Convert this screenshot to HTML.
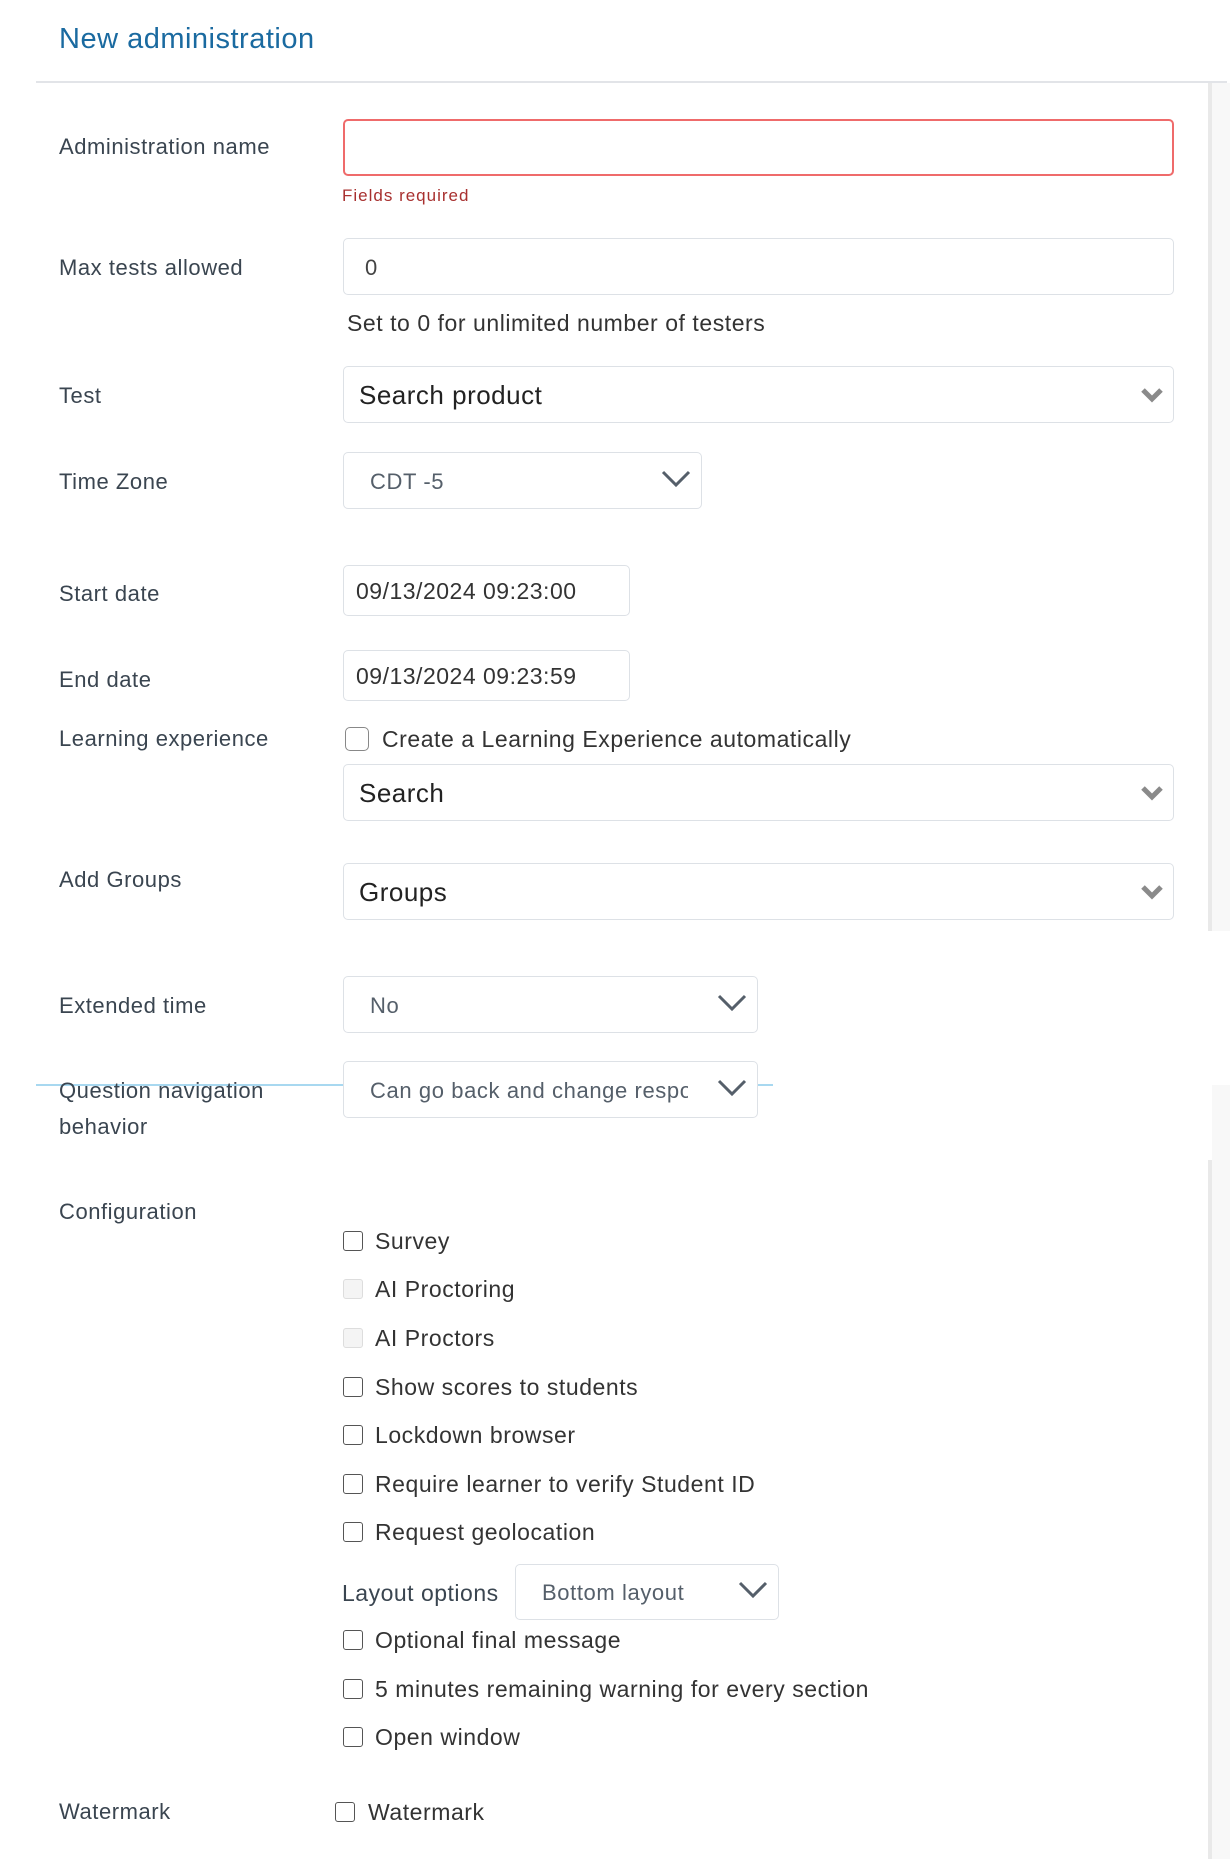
<!DOCTYPE html>
<html><head><meta charset="utf-8"><style>
*{margin:0;padding:0;box-sizing:border-box}
body{width:1230px;height:1859px;background:#fff;position:relative;overflow:hidden;font-family:"Liberation Sans",sans-serif;color:#3a4048}
.a{position:absolute;white-space:nowrap}
.lbl{font-size:22px;line-height:24px;color:#3a4550;letter-spacing:0.55px}
.box{position:absolute;border:1.5px solid #dde1e6;border-radius:5px;background:#fff}
.big{font-size:26px;color:#222;position:absolute;line-height:30px;white-space:nowrap;letter-spacing:0.5px}
.sm{font-size:22px;color:#555f6a;position:absolute;line-height:26px;white-space:nowrap;letter-spacing:0.6px}
.cb{position:absolute;width:20px;height:20px;border:1.8px solid #555;border-radius:3px;background:#fff}
.cb.d{border-color:#ddd;background:#f4f4f4}
.ct{font-size:23px;line-height:26px;color:#333;letter-spacing:0.55px}
svg{position:absolute}
</style></head><body>
<div class="a" style="left:59px;top:22px;font-size:29px;line-height:34px;color:#1a6aa0;letter-spacing:0.5px">New administration</div>
<div class="a" style="left:36px;top:81px;width:1191px;height:2px;background:#e2e4e8"></div>
<div class="a" style="left:1208px;top:83px;width:4px;height:848px;background:#e9e9e9"></div>
<div class="a" style="left:1212px;top:83px;width:18px;height:848px;background:#f8f8f8"></div>
<div class="a" style="left:1208px;top:1160px;width:4px;height:699px;background:#e9e9e9"></div>
<div class="a" style="left:1212px;top:1085px;width:18px;height:774px;background:#f8f8f8"></div>

<div class="a lbl" style="left:59px;top:135px">Administration name</div>
<div class="box" style="left:343px;top:119px;width:831px;height:57px;border:2px solid #ef6b6b"></div>
<div class="a" style="left:342px;top:186px;font-size:17px;line-height:20px;color:#a8302f;letter-spacing:1px">Fields required</div>

<div class="a lbl" style="left:59px;top:256px">Max tests allowed</div>
<div class="box" style="left:343px;top:238px;width:831px;height:57px"></div>
<div class="sm" style="left:365px;top:255px;color:#444">0</div>
<div class="a" style="left:347px;top:310px;font-size:23px;line-height:26px;color:#333;letter-spacing:0.55px">Set to 0 for unlimited number of testers</div>

<div class="a lbl" style="left:59px;top:384px">Test</div>
<div class="box" style="left:343px;top:366px;width:831px;height:57px"></div>
<div class="big" style="left:359px;top:380px">Search product</div>
<svg style="left:1140px;top:386px" width="24" height="18" viewBox="0 0 24 18"><path d="M3 4 L12 13 L21 4" fill="none" stroke="#8a8a8a" stroke-width="5"/></svg>

<div class="a lbl" style="left:59px;top:470px">Time Zone</div>
<div class="box" style="left:343px;top:452px;width:359px;height:57px"></div>
<div class="sm" style="left:370px;top:469px">CDT -5</div>
<svg style="left:661px;top:469px" width="30" height="20" viewBox="0 0 30 20"><path d="M2 3 L15 16 L28 3" fill="none" stroke="#555f6a" stroke-width="3"/></svg>

<div class="a lbl" style="left:59px;top:582px">Start date</div>
<div class="box" style="left:343px;top:565px;width:287px;height:51px"></div>
<div class="a" style="left:356px;top:578px;font-size:23px;line-height:26px;color:#333;letter-spacing:0.5px">09/13/2024 09:23:00</div>

<div class="a lbl" style="left:59px;top:668px">End date</div>
<div class="box" style="left:343px;top:650px;width:287px;height:51px"></div>
<div class="a" style="left:356px;top:663px;font-size:23px;line-height:26px;color:#333;letter-spacing:0.5px">09/13/2024 09:23:59</div>

<div class="a lbl" style="left:59px;top:727px">Learning experience</div>
<div class="cb" style="left:345px;top:727px;width:24px;height:24px;border-radius:5px;border-color:#888"></div>
<div class="a ct" style="left:382px;top:726px">Create a Learning Experience automatically</div>
<div class="box" style="left:343px;top:764px;width:831px;height:57px"></div>
<div class="big" style="left:359px;top:778px">Search</div>
<svg style="left:1140px;top:784px" width="24" height="18" viewBox="0 0 24 18"><path d="M3 4 L12 13 L21 4" fill="none" stroke="#8a8a8a" stroke-width="5"/></svg>

<div class="a lbl" style="left:59px;top:868px">Add Groups</div>
<div class="box" style="left:343px;top:863px;width:831px;height:57px"></div>
<div class="big" style="left:359px;top:877px">Groups</div>
<svg style="left:1140px;top:883px" width="24" height="18" viewBox="0 0 24 18"><path d="M3 4 L12 13 L21 4" fill="none" stroke="#8a8a8a" stroke-width="5"/></svg>

<div class="a lbl" style="left:59px;top:994px">Extended time</div>
<div class="box" style="left:343px;top:976px;width:415px;height:57px"></div>
<div class="sm" style="left:370px;top:993px">No</div>
<svg style="left:717px;top:993px" width="30" height="20" viewBox="0 0 30 20"><path d="M2 3 L15 16 L28 3" fill="none" stroke="#555f6a" stroke-width="3"/></svg>

<div class="a" style="left:36px;top:1084px;width:307px;height:1.5px;background:#a8d8f0"></div>
<div class="a" style="left:758px;top:1084px;width:15px;height:1.5px;background:#a8d8f0"></div>
<div class="a lbl" style="left:59px;top:1079px">Question navigation</div>
<div class="a lbl" style="left:59px;top:1115px">behavior</div>
<div class="box" style="left:343px;top:1061px;width:415px;height:57px"></div>
<div class="sm" style="left:370px;top:1078px;width:318px;overflow:hidden">Can go back and change response</div>
<svg style="left:717px;top:1078px" width="30" height="20" viewBox="0 0 30 20"><path d="M2 3 L15 16 L28 3" fill="none" stroke="#555f6a" stroke-width="3"/></svg>

<div class="a lbl" style="left:59px;top:1200px">Configuration</div>

<div class="cb" style="left:343px;top:1231px"></div><div class="a ct" style="left:375px;top:1228px">Survey</div>
<div class="cb d" style="left:343px;top:1279px"></div><div class="a ct" style="left:375px;top:1276px">AI Proctoring</div>
<div class="cb d" style="left:343px;top:1328px"></div><div class="a ct" style="left:375px;top:1325px">AI Proctors</div>
<div class="cb" style="left:343px;top:1377px"></div><div class="a ct" style="left:375px;top:1374px">Show scores to students</div>
<div class="cb" style="left:343px;top:1425px"></div><div class="a ct" style="left:375px;top:1422px">Lockdown browser</div>
<div class="cb" style="left:343px;top:1474px"></div><div class="a ct" style="left:375px;top:1471px">Require learner to verify Student ID</div>
<div class="cb" style="left:343px;top:1522px"></div><div class="a ct" style="left:375px;top:1519px">Request geolocation</div>

<div class="a" style="left:342px;top:1580px;font-size:23px;line-height:26px;color:#3a4550;letter-spacing:0.5px">Layout options</div>
<div class="box" style="left:515px;top:1564px;width:264px;height:56px"></div>
<div class="sm" style="left:542px;top:1580px">Bottom layout</div>
<svg style="left:738px;top:1580px" width="30" height="20" viewBox="0 0 30 20"><path d="M2 3 L15 16 L28 3" fill="none" stroke="#555f6a" stroke-width="3"/></svg>

<div class="cb" style="left:343px;top:1630px"></div><div class="a ct" style="left:375px;top:1627px">Optional final message</div>
<div class="cb" style="left:343px;top:1679px"></div><div class="a ct" style="left:375px;top:1676px">5 minutes remaining warning for every section</div>
<div class="cb" style="left:343px;top:1727px"></div><div class="a ct" style="left:375px;top:1724px">Open window</div>

<div class="a lbl" style="left:59px;top:1800px">Watermark</div>
<div class="cb" style="left:335px;top:1802px"></div><div class="a ct" style="left:368px;top:1799px">Watermark</div>
</body></html>
